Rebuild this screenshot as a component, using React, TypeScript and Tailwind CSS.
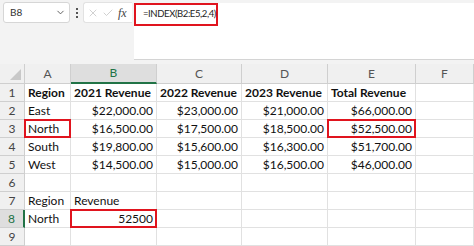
import { ChevronDown, X, Check } from "lucide-react";

const cols = ["A", "B", "C", "D", "E", "F"];

type Cell = { v?: string; right?: boolean; bold?: boolean; box?: boolean };

const rows: Cell[][] = [
  [
    { v: "Region", bold: true },
    { v: "2021 Revenue", bold: true },
    { v: "2022 Revenue", bold: true },
    { v: "2023 Revenue", bold: true },
    { v: "Total Revenue", bold: true },
    {},
  ],
  [
    { v: "East" },
    { v: "$22,000.00", right: true },
    { v: "$23,000.00", right: true },
    { v: "$21,000.00", right: true },
    { v: "$66,000.00", right: true },
    {},
  ],
  [
    { v: "North", box: true },
    { v: "$16,500.00", right: true },
    { v: "$17,500.00", right: true },
    { v: "$18,500.00", right: true },
    { v: "$52,500.00", right: true, box: true },
    {},
  ],
  [
    { v: "South" },
    { v: "$19,800.00", right: true },
    { v: "$15,600.00", right: true },
    { v: "$16,300.00", right: true },
    { v: "$51,700.00", right: true },
    {},
  ],
  [
    { v: "West" },
    { v: "$14,500.00", right: true },
    { v: "$15,000.00", right: true },
    { v: "$16,500.00", right: true },
    { v: "$46,000.00", right: true },
    {},
  ],
  [{}, {}, {}, {}, {}, {}],
  [{ v: "Region" }, { v: "Revenue" }, {}, {}, {}, {}],
  [{ v: "North" }, { v: "52500", right: true, box: true }, {}, {}, {}, {}],
  [{}, {}, {}, {}, {}, {}],
];

function FormulaBar() {
  return (
    <div className="flex h-[60px] bg-[#f3f3f3] pt-[2px]">
      <div className="flex w-[134px] shrink-0 items-start">
        <div className="ml-[3px] flex h-[21px] w-[67px] items-center justify-between rounded-[3px] border border-[#d6d6d6] bg-white pl-[6px] pr-[3px]">
          <span className="text-[10px] text-[#333]">B8</span>
          <ChevronDown className="h-[11px] w-[11px] text-[#555]" strokeWidth={2} />
        </div>
        <div className="ml-[6px] mt-[6px] flex flex-col gap-[2px]">
          <span className="h-[2px] w-[2px] bg-[#555]" />
          <span className="h-[2px] w-[2px] bg-[#555]" />
          <span className="h-[2px] w-[2px] bg-[#555]" />
        </div>
        <div className="ml-[5px] flex h-[21px] w-[49px] items-center gap-[3px] rounded-l-[3px] border border-r-0 border-[#e2e2e2] bg-white pl-[3px]">
          <X className="h-[12px] w-[12px] text-[#c2c2c2]" strokeWidth={1.5} />
          <Check className="h-[12px] w-[12px] text-[#c2c2c2]" strokeWidth={1.5} />
          <span className="ml-[1px] font-['Liberation_Serif',serif] text-[12px] italic text-[#444]">fx</span>
        </div>
      </div>
      <div className="mt-[1px] flex-1 border-b border-[#d4d4d4] bg-white">
        <div className="flex h-[23px] w-[84px] items-center border-2 border-[#e0141e] pl-[7px] text-[9.5px] tracking-[-0.4px] text-[#222]">
          =INDEX(B2:E5,2,4)
        </div>
      </div>
    </div>
  );
}

function Grid() {
  return (
    <div className="grid grid-cols-[25px_46px_86px_85px_86px_88px_1fr] font-['Lato',sans-serif] text-[#111]">
      <div className="relative h-[20px] border-b border-r border-[#cfcfcf] bg-[#f0f0f0]">
        <span className="absolute bottom-[3px] right-[3px] h-0 w-0 border-b-[11px] border-l-[11px] border-b-[#c8c8c8] border-l-transparent" />
      </div>
      {cols.map((c) => (
        <div
          key={c}
          className={
            c === "B"
              ? "flex h-[20px] items-center justify-center border-b-2 border-r border-b-[#217346] border-r-[#cfcfcf] bg-[#dedede] text-[12px] text-[#217346]"
              : "flex h-[20px] items-center justify-center border-b border-r border-[#cfcfcf] bg-[#f0f0f0] text-[12px] text-[#555]"
          }
        >
          {c}
        </div>
      ))}
      {rows.map((r, i) => (
        <Row key={i} n={i + 1} cells={r} />
      ))}
    </div>
  );
}

function Row({ n, cells }: { n: number; cells: Cell[] }) {
  const active = n === 8;
  return (
    <>
      <div
        className={
          active
            ? "flex h-[18px] items-center justify-center border-b border-r-2 border-b-[#cfcfcf] border-r-[#217346] bg-[#dedede] text-[12px] text-[#217346]"
            : "flex h-[18px] items-center justify-center border-b border-r border-[#cfcfcf] bg-[#f0f0f0] text-[12px] text-[#444]"
        }
      >
        {n}
      </div>
      {cells.map((c, j) => (
        <div
          key={j}
          className={
            "relative flex h-[18px] items-center whitespace-nowrap border-b border-r border-[#e1e1e1] bg-white px-[3px] text-[12px] " +
            (c.right ? "justify-end " : "justify-start ") +
            (c.bold ? "font-bold" : "")
          }
        >
          {c.v}
          {c.box && <span className="absolute -inset-px border-2 border-[#e0141e]" />}
        </div>
      ))}
    </>
  );
}

export default function App() {
  return (
    <div className="h-[246px] w-[474px] overflow-hidden bg-[#f3f3f3] font-['Lato',sans-serif]">
      <FormulaBar />
      <div className="h-[4px]" />
      <Grid />
    </div>
  );
}
